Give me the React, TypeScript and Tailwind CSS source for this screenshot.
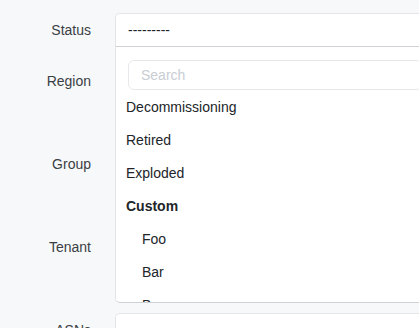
import React from "react";

const Row = ({ label, top, children }: { label: string; top: string; children?: React.ReactNode }) => (
  <div className={`flex items-center ${top}`}>
    <div className="w-[91px] shrink-0 text-right text-[14px] text-[#3a3f44]">{label}</div>
    <div className="ml-[24px] flex-1">
      {children ?? <div className="h-[34px] rounded-l-[5px] border border-r-0 border-[#e3e5e8] bg-white" />}
    </div>
  </div>
);

export default function App() {
  const items: { t: string; bold?: boolean; indent?: boolean }[] = [
    { t: "Decommissioning" },
    { t: "Retired" },
    { t: "Exploded" },
    { t: "Custom", bold: true },
    { t: "Foo", indent: true },
    { t: "Bar", indent: true },
    { t: "Baz", indent: true },
  ];
  return (
    <div
      className="relative h-[328px] w-[419px] overflow-hidden bg-[#f7f8fa]"
      style={{ fontFamily: '"Liberation Sans", Arial, sans-serif' }}
    >
      <div className="flex flex-col pt-[13px]">
        <Row label="Status" top="">
          <div className="flex h-[34px] items-center rounded-tl-[5px] border border-r-0 border-b-[#ced1d6] border-[#e3e5e8] bg-white pl-[12px] text-[14px] text-[#212529]">
            ---------
          </div>
        </Row>
        <Row label="Region" top="mt-[17px]" />
        <Row label="Group" top="mt-[49px]" />
        <Row label="Tenant" top="mt-[49px]" />
        <Row label="ASNs" top="mt-[49px]" />
      </div>

      <div className="absolute left-[115px] top-[47px] h-[256px] w-[320px] overflow-hidden rounded-b-[5px] border border-t-0 border-[#e3e5e8] border-b-[#ced1d6] bg-white">
        <div className="px-[12px] pt-[13px]">
          <div className="flex h-[30px] items-center rounded-[6px] border border-[#e6e8eb] pl-[12px] text-[14px] text-[#c9cdd3]">
            Search
          </div>
        </div>
        <div className="flex flex-col pt-[1px]">
          {items.map((it) => (
            <div
              key={it.t}
              className={`flex h-[33px] shrink-0 items-center text-[14px] text-[#212529] ${it.indent ? "pl-[26px]" : "pl-[10px]"} ${it.bold ? "font-bold" : ""}`}
            >
              {it.t}
            </div>
          ))}
        </div>
      </div>
    </div>
  );
}
